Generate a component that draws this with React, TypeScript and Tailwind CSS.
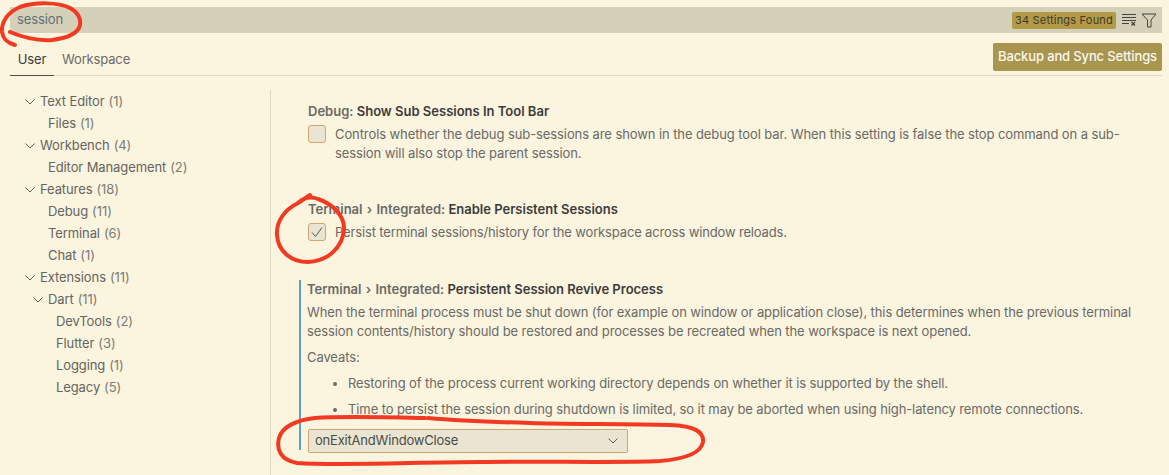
import React from "react";

const font = { fontFamily: "Inter, 'Liberation Sans', sans-serif" };

function Chevron({ className = "" }: { className?: string }) {
  return (
    <svg width="10" height="6" viewBox="0 0 10 6" className={className} fill="none" stroke="#5f5f5c" strokeWidth="1">
      <path d="M0.5 0.5 L5 5 L9.5 0.5" />
    </svg>
  );
}

const tree: { label: string; count: number; level: number; parent?: boolean }[] = [
  { label: "Text Editor", count: 1, level: 0, parent: true },
  { label: "Files", count: 1, level: 1 },
  { label: "Workbench", count: 4, level: 0, parent: true },
  { label: "Editor Management", count: 2, level: 1 },
  { label: "Features", count: 18, level: 0, parent: true },
  { label: "Debug", count: 11, level: 1 },
  { label: "Terminal", count: 6, level: 1 },
  { label: "Chat", count: 1, level: 1 },
  { label: "Extensions", count: 11, level: 0, parent: true },
  { label: "Dart", count: 11, level: 2, parent: true },
  { label: "DevTools", count: 2, level: 3 },
  { label: "Flutter", count: 3, level: 3 },
  { label: "Logging", count: 1, level: 3 },
  { label: "Legacy", count: 5, level: 3 },
];

function TreeRow({ label, count, level, parent }: { label: string; count: number; level: number; parent?: boolean }) {
  const pad = level === 0 ? "pl-[40px]" : level === 1 ? "pl-[48px]" : level === 2 ? "pl-[48px]" : "pl-[56px]";
  return (
    <div className={`relative h-[22px] flex items-center text-[13px] text-[#656560] whitespace-nowrap ${pad}`}>
      {parent && (
        <Chevron className={level === 0 ? "absolute left-[25px] top-[8px]" : "absolute left-[33px] top-[8px]"} />
      )}
      <span>{label}</span>
      <span className="ml-[4px] text-[#7b7b75]">({count})</span>
    </div>
  );
}

function Title({ cat, name }: { cat: React.ReactNode; name: string }) {
  return (
    <div className="h-[18px] leading-[18px] text-[13px] font-semibold text-[#6a6a66] whitespace-nowrap tracking-[0px]">
      {cat} <span className="text-[#3b3b3b]">{name}</span>
    </div>
  );
}

const terminalCat = (
  <>
    Terminal <span className="mx-px">›</span> Integrated:
  </>
);

function Checkbox({ checked }: { checked?: boolean }) {
  return (
    <div className="w-[18px] h-[18px] shrink-0 rounded-[3px] border border-[#cfa672] bg-[#e9e5d2] flex items-center justify-center">
      {checked && (
        <svg width="14" height="14" viewBox="0 0 14 14" fill="none" stroke="#55554f" strokeWidth="1">
          <path d="M2 7.5 L5.5 11.5 L12 2.5" />
        </svg>
      )}
    </div>
  );
}

export default function App() {
  return (
    <div style={font} className="relative w-[1169px] h-[475px] overflow-hidden bg-[#fbf4df] text-[13px] tracking-[-0.1px]">
      <div className="pl-[10px] pr-[7px] pt-[7px]">
        <div className="h-[26px] bg-[#d5d0b9] flex items-center pl-[7px] pr-[5px]">
          <span className="text-[13px] text-[#5e6f74]">session</span>
          <div className="ml-auto flex items-center">
            <span className="h-[17px] px-[3px] rounded-[2px] bg-[#b39a46] text-[#3c3a2c] text-[11px] leading-[17px] tracking-[0.2px] whitespace-nowrap">
              34 Settings Found
            </span>
            <svg width="16" height="14" viewBox="0 0 16 14" className="ml-[5px]" fill="none" stroke="#454540" strokeWidth="1">
              <path d="M1 1.5 H15 M1 4.5 H15 M1 7.5 H15 M1 10.5 H8" />
              <path d="M10.5 9 L14 12.5 M14 9 L10.5 12.5" strokeWidth="1.2" />
            </svg>
            <svg width="16" height="15" viewBox="0 0 16 15" className="ml-[4px]" fill="none" stroke="#454540" strokeWidth="1">
              <path d="M1 1 H15 L10 7 V14 H6.5 V7 Z" />
            </svg>
          </div>
        </div>
      </div>

      <div className="ml-[10px] mr-[7px] mt-[9px] h-[34px] flex items-start justify-between border-b border-[#dfd8c3]">
        <div className="flex text-[13px] h-[34px]">
          <div className="w-[44px] h-[34px] flex items-center justify-center text-[#3b3b3b] border-b border-[#4f4f4a] pt-[3px]">User</div>
          <div className="pl-[8px] h-[33px] flex items-center text-[#6a6a66] pt-[3px] tracking-[-0.15px]">Workspace</div>
        </div>
        <div className="h-[28px] mt-[1px] w-[169px] rounded-[2px] bg-[#a8964f] text-[#fbf8ef] flex items-center justify-center font-medium text-[13px] whitespace-nowrap tracking-[-0.13px]">
          Backup and Sync Settings
        </div>
      </div>

      <div className="flex mt-[14px]">
        <div className="w-[270px] h-[400px] shrink-0 pt-[1px]">
          {tree.map((t) => (
            <TreeRow key={t.label} {...t} />
          ))}
        </div>
        <div className="flex-1 border-l border-[#dfd8c3] pl-[29px] h-[400px] pt-[12px] pr-[33px] text-[#6a6a66]">
          <div className="pl-[8px]">
            <Title cat="Debug:" name="Show Sub Sessions In Tool Bar" />
            <div className="flex mt-[5px]">
              <Checkbox />
              <div className="ml-[9px] leading-[19px] tracking-[-0.09px]">
                <div className="whitespace-nowrap">Controls whether the debug sub-sessions are shown in the debug tool bar. When this setting is false the stop command on a sub-</div>
                <div>session will also stop the parent session.</div>
              </div>
            </div>
          </div>
          <div className="pl-[8px] mt-[37px]">
            <Title cat={terminalCat} name="Enable Persistent Sessions" />
            <div className="flex mt-[5px]">
              <Checkbox checked />
              <div className="ml-[9px] leading-[18px] tracking-[-0.15px]">Persist terminal sessions/history for the workspace across window reloads.</div>
            </div>
          </div>
          <div className="mt-[42px] border-l-2 border-[#5ea0d6] pl-[6px] h-[170px] -ml-px">
            <div className="-mt-[3px]">
              <Title cat={terminalCat} name="Persistent Session Revive Process" />
            </div>
            <div className="mt-[5px] leading-[19px] whitespace-nowrap">
              <div>When the terminal process must be shut down (for example on window or application close), this determines when the previous terminal</div>
              <div>session contents/history should be restored and processes be recreated when the workspace is next opened.</div>
            </div>
            <div className="mt-[7px] leading-[19px]">Caveats:</div>
            <ul className="list-disc pl-[41px] mt-[7px] whitespace-nowrap">
              <li className="h-[26px] leading-[19px]">Restoring of the process current working directory depends on whether it is supported by the shell.</li>
              <li className="h-[19px] leading-[19px]">Time to persist the session during shutdown is limited, so it may be aborted when using high-latency remote connections.</li>
            </ul>
            <div className="mt-[10px] ml-px w-[320px] h-[24px] rounded-[2px] border border-[#cfa672] bg-[#e9e5d2] flex items-center pl-[6px] pr-[9px] text-[#4b4b47] tracking-[-0.2px]">
              <span>onExitAndWindowClose</span>
              <Chevron className="ml-auto" />
            </div>
          </div>
        </div>
      </div>

      <svg className="absolute inset-0 pointer-events-none" width="1169" height="475" viewBox="0 0 1169 475" fill="none" stroke="#f23a22" strokeWidth="4" strokeLinecap="round" strokeLinejoin="round">
        <path d="M15 45 C8 43 3 40 2 32 C1 22 8 12 20 7 C35 2 58 2 70 8 C78 12 81 19 80 25 C78 34 68 38 52 40 C38 41 22 37 10 32" />
        <path d="M310 195 L298 203 C284 210 276 222 277 235 C278 252 292 262 308 262 C328 261 342 248 344 230 C345 216 333 204 318 199 C310 196 303 198 298 203" />
        <path d="M425 418 C380 417 340 416 315 418 C296 420 282 427 279 438 C276 450 281 460 297 463 C340 466 420 462 480 462 C540 461 620 463 660 461 C685 459 701 453 703 442 C704 432 695 426 670 425 C620 424 560 424 530 423 C490 422 450 420 428 418" />
      </svg>
    </div>
  );
}
